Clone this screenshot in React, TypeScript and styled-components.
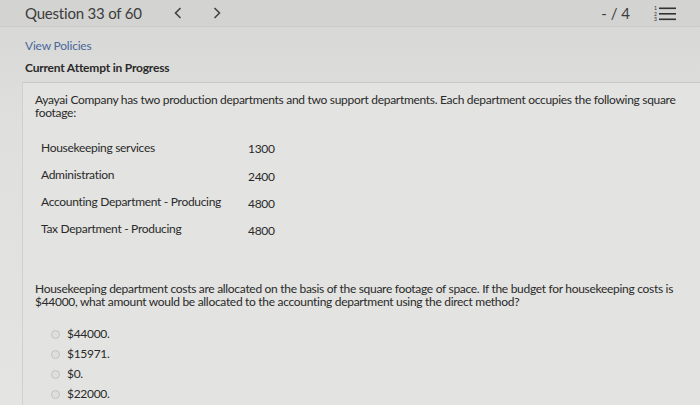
import React from "react";
import styled, { createGlobalStyle } from "styled-components";

const GlobalStyle = createGlobalStyle`
  html, body {
    margin: 0;
    padding: 0;
    background: #dcdcda;
    font-family: Lato, "Open Sans", sans-serif;
    color: #2e2e2e;
  }
`;

const Page = styled.div`
  width: 700px;
  height: 405px;
  overflow: hidden;
  background: linear-gradient(180deg, #d6d6d4 0%, #dfdfdd 30%, #e4e4e2 100%);
`;

const TopBar = styled.div`
  display: flex;
  align-items: center;
  height: 26px;
  padding: 0 22px 0 25px;
  background: #d3d3d1;
  border-bottom: 1px solid #cbcbc9;
`;

const QuestionTitle = styled.div`
  font-size: 15px;
  letter-spacing: -0.2px;
  color: #3c3c3c;
`;

const NavButton = styled.button<{ $gap: number }>`
  border: none;
  background: none;
  padding: 0;
  margin-left: ${(p) => p.$gap}px;
  display: flex;
  align-items: center;
  color: #444;
`;

const Spacer = styled.div`
  flex: 1;
`;

const Score = styled.div`
  font-size: 15px;
  color: #3c3c3c;
  margin-right: 24px;
`;

const PolicyBlock = styled.div`
  padding: 11px 25px 7px;
  display: flex;
  flex-direction: column;
  gap: 7px;
  letter-spacing: -0.2px;
`;

const PolicyLink = styled.a`
  font-size: 12px;
  color: #4a679c;
  text-decoration: none;
`;

const AttemptLabel = styled.div`
  font-size: 12px;
  font-weight: 700;
  color: #2a2a2a;
`;

const Panel = styled.div`
  margin-left: 22px;
  border-top: 1px solid #c9c9c7;
  border-left: 1px solid #d0d0ce;
  padding: 10px 8px 0 12px;
  background: #e3e3e1;
  height: 320px;
  letter-spacing: -0.3px;
`;

const Paragraph = styled.p`
  margin: 0;
  font-size: 12px;
  line-height: 13px;
  color: #2a2a2a;
`;

const DataTable = styled.div`
  display: grid;
  grid-template-columns: 207px auto;
  row-gap: 13px;
  padding: 22px 0 0 6px;
  margin-bottom: 46px;
  font-size: 12px;
  color: #2a2a2a;
`;

const Cell = styled.div<{ $drop?: number }>`
  line-height: 14px;
  transform: translateY(${(p) => p.$drop ?? 0}px);
`;

const Options = styled.div`
  display: flex;
  flex-direction: column;
  gap: 6px;
  padding: 19px 0 0 16px;
`;

const Option = styled.label`
  display: flex;
  align-items: center;
  gap: 7px;
  font-size: 12px;
  line-height: 14px;
  color: #2a2a2a;
`;

const Radio = styled.span`
  width: 7px;
  height: 7px;
  border-radius: 50%;
  border: 1px solid #c2c2c0;
  background: #dedede;
`;

const rows: [string, string][] = [
  ["Housekeeping services", "1300"],
  ["Administration", "2400"],
  ["Accounting Department - Producing", "4800"],
  ["Tax Department - Producing", "4800"],
];

const answers = ["$44000.", "$15971.", "$0.", "$22000."];

const ListIcon = () => (
  <svg width="24" height="16" viewBox="0 0 24 16">
    <text x="0" y="5" fontSize="5" fontFamily="Lato, sans-serif" fill="#333">1</text>
    <text x="0" y="10.5" fontSize="5" fontFamily="Lato, sans-serif" fill="#333">2</text>
    <text x="0" y="16" fontSize="5" fontFamily="Lato, sans-serif" fill="#333">3</text>
    <rect x="5" y="2.5" width="17" height="1.6" fill="#333" />
    <rect x="5" y="8" width="17" height="1.6" fill="#333" />
    <rect x="5" y="13.5" width="17" height="1.6" fill="#333" />
  </svg>
);

const Chevron = ({ dir }: { dir: "left" | "right" }) => (
  <svg width="10" height="14" viewBox="0 0 10 14">
    <path
      d={dir === "left" ? "M7.5 2 L2.5 7 L7.5 12" : "M2.5 2 L7.5 7 L2.5 12"}
      fill="none"
      stroke="#444"
      strokeWidth="1.6"
    />
  </svg>
);

export default function App() {
  return (
    <Page>
      <GlobalStyle />
      <TopBar>
        <QuestionTitle>Question 33 of 60</QuestionTitle>
        <NavButton $gap={31}>
          <Chevron dir="left" />
        </NavButton>
        <NavButton $gap={29}>
          <Chevron dir="right" />
        </NavButton>
        <Spacer />
        <Score>- / 4</Score>
        <ListIcon />
      </TopBar>
      <PolicyBlock>
        <PolicyLink href="#">View Policies</PolicyLink>
        <AttemptLabel>Current Attempt in Progress</AttemptLabel>
      </PolicyBlock>
      <Panel>
        <Paragraph>
          Ayayai Company has two production departments and two support departments. Each department occupies the following square footage:
        </Paragraph>
        <DataTable>
          {rows.map(([label, value], i) => (
            <React.Fragment key={label}>
              <Cell>{label}</Cell>
              <Cell $drop={i === 0 ? 1 : 2}>{value}</Cell>
            </React.Fragment>
          ))}
        </DataTable>
        <Paragraph>
          Housekeeping department costs are allocated on the basis of the square footage of space. If the budget for housekeeping costs is $44000, what amount would be allocated to the accounting department using the direct method?
        </Paragraph>
        <Options>
          {answers.map((a) => (
            <Option key={a}>
              <Radio />
              {a}
            </Option>
          ))}
        </Options>
      </Panel>
    </Page>
  );
}
